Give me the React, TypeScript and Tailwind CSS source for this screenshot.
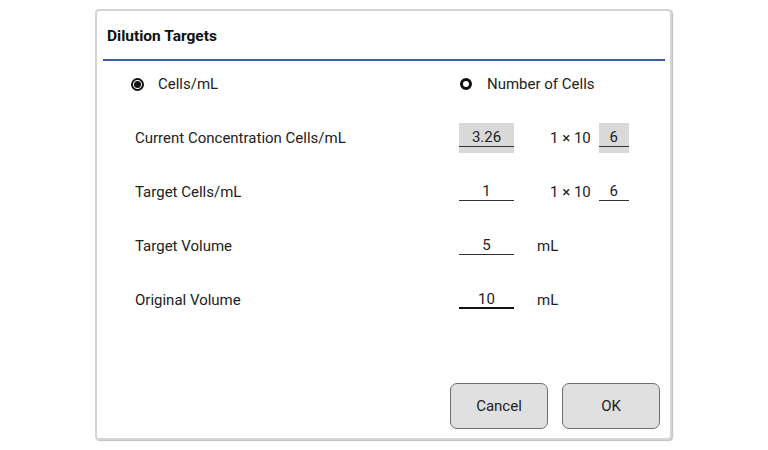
import React from "react";

/*
 * Dilution Targets dialog
 */

const font = { fontFamily: "Roboto, 'Liberation Sans', sans-serif" };

function Field({ value, width, shaded = false, thick = false }: { value: string; width: string; shaded?: boolean; thick?: boolean }) {
  return (
    <div className={`${width} h-[30px] pt-[3px] ${shaded ? "bg-[#d9d9d9]" : ""}`}>
      <div
        className={`h-[21px] pt-[3px] flex items-center justify-center text-[15px] text-[#222] ${
          thick ? "border-b-2 border-[#111]" : "border-b border-[#333]"
        }`}
      >
        {value}
      </div>
    </div>
  );
}

function Row({ label, children }: { label: string; children: React.ReactNode }) {
  return (
    <div className="flex items-center h-[54px]">
      <div className="w-[324px] pl-[38px] box-content text-[15px] text-[#222]">{label}</div>
      {children}
    </div>
  );
}

export default function App() {
  return (
    <div className="w-[768px] h-[450px] bg-white pl-[95px] pt-[9px]" style={font}>
      <div className="w-[577px] h-[431px] border-2 border-[#d4d4d4] rounded-[4px] bg-white shadow-[1px_1px_1px_rgba(0,0,0,0.25)] flex flex-col">
        {/* Header */}
        <div className="h-[48px] flex items-center pl-[10px] pt-[4px] text-[15.5px] font-bold text-[#111]">
          Dilution Targets
        </div>
        <div className="h-[2px] bg-[#3b5ba5] ml-[6px] mr-[5px]" />

        {/* Radio choice */}
        <div className="h-[46px] flex items-center text-[15px] text-[#222]">
          <div className="w-[363px] flex items-center">
            <div className="ml-[34px] w-[13px] h-[13px] rounded-full border-2 border-[#111] flex items-center justify-center">
              <div className="w-[7px] h-[7px] rounded-full bg-[#111]" />
            </div>
            <span className="ml-[14px]">Cells/mL</span>
          </div>
          <div className="w-[12px] h-[12px] rounded-full border-[3px] border-[#111]" />
          <span className="ml-[15px]">Number of Cells</span>
        </div>

        <div className="mt-[4px]">
          <Row label="Current Concentration Cells/mL">
            <Field value="3.26" width="w-[55px]" shaded />
            <span className="ml-[36px] text-[15px] text-[#222]">1 × 10</span>
            <div className="ml-[8px]">
              <Field value="6" width="w-[30px]" shaded />
            </div>
          </Row>
          <Row label="Target Cells/mL">
            <Field value="1" width="w-[55px]" />
            <span className="ml-[36px] text-[15px] text-[#222]">1 × 10</span>
            <div className="ml-[8px]">
              <Field value="6" width="w-[30px]" />
            </div>
          </Row>
          <Row label="Target Volume">
            <Field value="5" width="w-[55px]" />
            <span className="ml-[23px] text-[15px] text-[#222]">mL</span>
          </Row>
          <Row label="Original Volume">
            <Field value="10" width="w-[55px]" thick />
            <span className="ml-[23px] text-[15px] text-[#222]">mL</span>
          </Row>
        </div>

        {/* Buttons */}
        <div className="mt-auto mb-[9px] mr-[10px] flex justify-end gap-[14px]">
          <button className="w-[98px] h-[46px] rounded-[7px] border border-[#6e6e6e] bg-[#e0e0e0] text-[15px] text-[#222]">
            Cancel
          </button>
          <button className="w-[98px] h-[46px] rounded-[7px] border border-[#6e6e6e] bg-[#e0e0e0] text-[15px] text-[#222]">
            OK
          </button>
        </div>
      </div>
    </div>
  );
}
